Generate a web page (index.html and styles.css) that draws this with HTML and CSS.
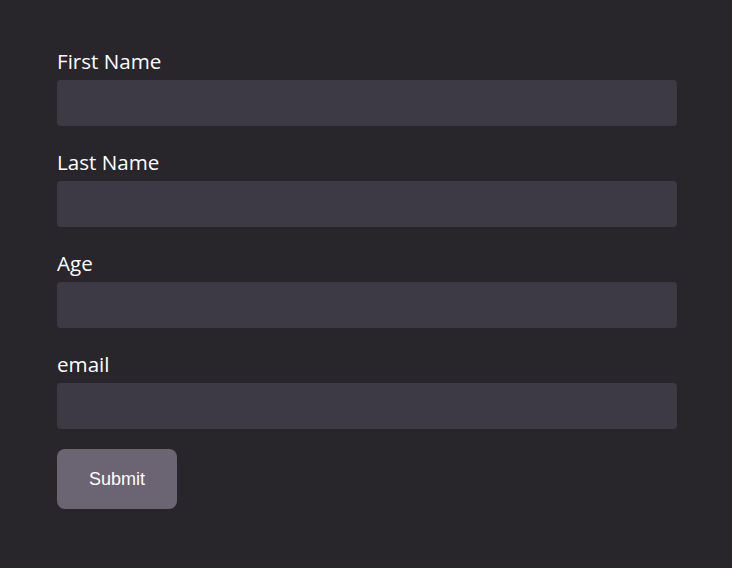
FILE: index.html
```html
<!DOCTYPE html>
<html>
<head>
<meta charset="utf-8">
<link rel="stylesheet" href="styles.css">
</head>
<body>
<form class="form">
  <div class="field">
    <label class="label">First Name</label>
    <input class="input" type="text">
  </div>
  <div class="field">
    <label class="label">Last Name</label>
    <input class="input" type="text">
  </div>
  <div class="field">
    <label class="label">Age</label>
    <input class="input" type="text">
  </div>
  <div class="field">
    <label class="label">email</label>
    <input class="input" type="text">
  </div>
  <button class="submit" type="button">Submit</button>
</form>
</body>
</html>
```
FILE: styles.css
```css
html, body {
  margin: 0;
  padding: 0;
  background: #28262b;
  height: 100%;
}
body {
  padding: 48px 57px;
  box-sizing: border-box;
}
.form {
  width: 620px;
  display: flex;
  flex-direction: column;
}
.field {
  display: flex;
  flex-direction: column;
  margin-bottom: 23px;
}
.field:nth-last-of-type(1) {
  margin-bottom: 20px;
}
.label {
  font-family: "Open Sans", "Noto Sans", sans-serif;
  font-size: 20.6px;
  line-height: 27px;
  color: #ffffff;
  margin-bottom: 5px;
}
.input {
  height: 46px;
  box-sizing: border-box;
  border: none;
  border-radius: 4px;
  background: #3e3a45;
  margin: 0;
  padding: 0 12px;
  color: #fff;
  outline: none;
}
.submit {
  width: 120px;
  height: 60px;
  border: none;
  border-radius: 8px;
  background: #6b6472;
  color: #ffffff;
  font-family: "Liberation Sans", Arial, sans-serif;
  font-size: 18px;
  padding: 0;
  cursor: pointer;
}
```
